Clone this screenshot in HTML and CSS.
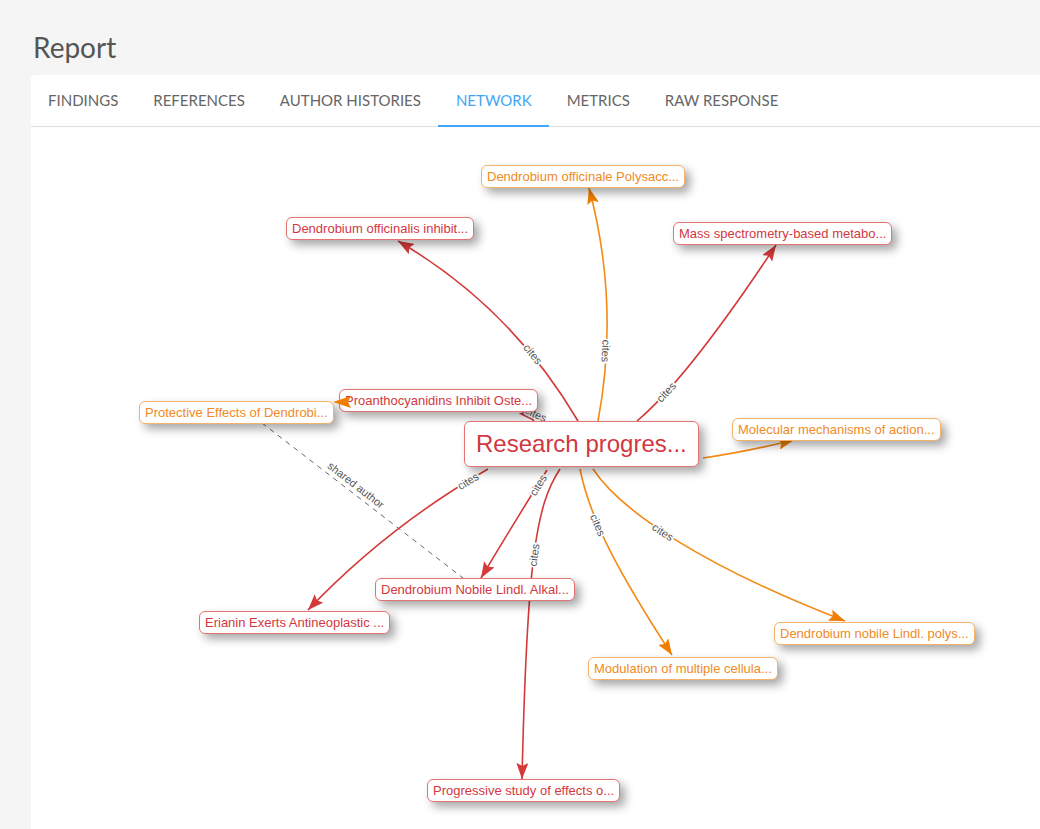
FILE: index.html
```html
<!DOCTYPE html>
<html lang="en">
<head>
    <meta charset="UTF-8">
    <meta name="viewport" content="width=device-width, initial-scale=1.0">
    <title>Report</title>
    <link rel="stylesheet" href="styles.css">
</head>
<body>
    <div class="page">
        <h1 class="title">Report</h1>
        <div class="card">
            <nav class="tabs">
                <a class="tab">Findings</a>
                <a class="tab">References</a>
                <a class="tab">Author Histories</a>
                <a class="tab active">Network</a>
                <a class="tab">Metrics</a>
                <a class="tab">Raw Response</a>
            </nav>

            <div class="network">
                <!-- edges, drawn in page coordinates -->
                <svg class="edges" viewBox="31 127 1009 702">
                    <defs>
                        <marker id="arrowRed" viewBox="0 0 16 12" refX="16" refY="6" markerWidth="16" markerHeight="12" markerUnits="userSpaceOnUse" orient="auto">
                            <path d="M0,0 L16,6 L0,12 L3,6 Z" class="head-red"/>
                        </marker>
                        <marker id="arrowOrange" viewBox="0 0 16 12" refX="16" refY="6" markerWidth="16" markerHeight="12" markerUnits="userSpaceOnUse" orient="auto">
                            <path d="M0,0 L16,6 L0,12 L3,6 Z" class="head-orange"/>
                        </marker>
                    </defs>

                    <path class="edge shared" d="M 262 423 L 463 578"/>

                    <path class="edge red" d="M 578 421 Q 511 307 398 241" marker-end="url(#arrowRed)"/>
                    <path class="edge orange" d="M 598 421 Q 620 304 589 188" marker-end="url(#arrowOrange)"/>
                    <path class="edge red" d="M 637 421 Q 688 378 776 245" marker-end="url(#arrowRed)"/>
                    <path class="edge red" d="M 512 398 L 534 421" marker-end="url(#arrowRed)"/>
                    <path class="edge orange" d="M 703 458 Q 745 452 794 440" marker-end="url(#arrowOrange)"/>
                    <path class="edge red" d="M 488 469 Q 387 527 308 610" marker-end="url(#arrowRed)"/>
                    <path class="edge red" d="M 547 470 Q 514 523 481 578" marker-end="url(#arrowRed)"/>
                    <path class="edge red" d="M 560 469 C 536 505 527 560 522 779" marker-end="url(#arrowRed)"/>
                    <path class="edge orange" d="M 580 469 C 590 520 620 575 672 655" marker-end="url(#arrowOrange)"/>
                    <path class="edge orange" d="M 593 469 C 620 510 700 565 845 621" marker-end="url(#arrowOrange)"/>

                    <text class="label" transform="translate(533 354) rotate(51)">cites</text>
                    <text class="label" transform="translate(606 351) rotate(93)">cites</text>
                    <text class="label" transform="translate(666 392) rotate(-47)">cites</text>
                    <text class="label" transform="translate(536 414) rotate(25)">cites</text>
                    <text class="label" transform="translate(468 481) rotate(-31.5)">cites</text>
                    <text class="label" transform="translate(538 485) rotate(-58.6)">cites</text>
                    <text class="label" transform="translate(534 555) rotate(-82.7)">cites</text>
                    <text class="label" transform="translate(598 525) rotate(66.7)">cites</text>
                    <text class="label" transform="translate(663 532) rotate(33.4)">cites</text>
                    <text class="label" transform="translate(356 485) rotate(37.8)">shared author</text>
                </svg>

                <div class="node orange" style="left:450px; top:38px;">Dendrobium officinale Polysacc...</div>
                <div class="node red" style="left:255px; top:90px;">Dendrobium officinalis inhibit...</div>
                <div class="node red" style="left:642px; top:95px;">Mass spectrometry-based metabo...</div>
                <div class="node red" style="left:308px; top:262px;">Proanthocyanidins Inhibit Oste...</div>
                <div class="node orange" style="left:108px; top:274px;">Protective Effects of Dendrobi...</div>
                <div class="node red main" style="left:433px; top:294px;">Research progres...</div>
                <div class="node orange" style="left:701px; top:291px;">Molecular mechanisms of action...</div>
                <div class="node red" style="left:344px; top:451px;">Dendrobium Nobile Lindl. Alkal...</div>
                <div class="node red" style="left:168px; top:484px;">Erianin Exerts Antineoplastic ...</div>
                <div class="node orange" style="left:743px; top:495px;">Dendrobium nobile Lindl. polys...</div>
                <div class="node orange" style="left:557px; top:530px;">Modulation of multiple cellula...</div>
                <div class="node red" style="left:396px; top:652px;">Progressive study of effects o...</div>

                <!-- arrow heads that sit over the nodes -->
                <svg class="overlay" viewBox="31 127 1009 702">
                    <path class="head-orange" d="M 333 402 L 351 396 L 348 402 L 351 408 Z"/>
                </svg>
            </div>
        </div>
    </div>
</body>
</html>
```

FILE: styles.css
```css
* {
    box-sizing: border-box;
}

body {
    margin: 0;
    background-color: #f5f5f5;
    font-family: Lato, "Open Sans", sans-serif;
    overflow: hidden;
}

.page {
    padding-left: 31px;
}

.title {
    margin: 0;
    height: 75px;
    padding-top: 33px;
    padding-left: 2px;
    font-size: 28px;
    line-height: 28px;
    font-weight: 400;
    color: #555;
}

.card {
    background: white;
    height: 754px;
    border-radius: 4px 0 0 0;
}

.tabs {
    display: flex;
    height: 52px;
    border-bottom: 1px solid #e0e0e0;
}

.tab {
    display: flex;
    align-items: center;
    padding: 0 17.5px;
    margin-bottom: -1px;
    font-size: 15px;
    color: #666;
    text-transform: uppercase;
    border-bottom: 2px solid transparent;
    cursor: pointer;
}

.tab:first-child {
    padding-left: 17px;
}

.tab.active {
    color: #42a5f5;
    border-bottom-color: #42a5f5;
}

.network {
    position: relative;
    height: 702px;
    overflow: hidden;
}

.edges, .overlay {
    position: absolute;
    left: 0;
    top: 0;
    width: 1009px;
    height: 702px;
}

.overlay {
    pointer-events: none;
}

.edge {
    fill: none;
    stroke-width: 1.6;
}

.edge.red {
    stroke: #d43a3a;
}

.edge.orange {
    stroke: #f28a14;
}

.edge.shared {
    stroke: #666;
    stroke-width: 1;
    stroke-dasharray: 5 5;
}

.head-red {
    fill: #d43a3a;
}

.head-orange {
    fill: #f27d00;
}

.label {
    font-family: "Liberation Sans", Arial, sans-serif;
    font-size: 11px;
    fill: #555;
    stroke: white;
    stroke-width: 3;
    paint-order: stroke;
    text-anchor: middle;
    dominant-baseline: central;
}

.node {
    position: absolute;
    padding: 3px 5px;
    border: 1px solid;
    border-radius: 6px;
    background: white;
    font-family: "Liberation Sans", Arial, sans-serif;
    font-size: 13px;
    line-height: 15px;
    white-space: nowrap;
    box-shadow: 5px 5px 10px rgba(0, 0, 0, 0.35);
}

.node.red {
    color: #d2383f;
    border-color: #e57373;
}

.node.orange {
    color: #f08a24;
    border-color: #f5b36a;
}

.node.main {
    font-size: 24px;
    line-height: 26px;
    padding: 9px 11px;
}
```
